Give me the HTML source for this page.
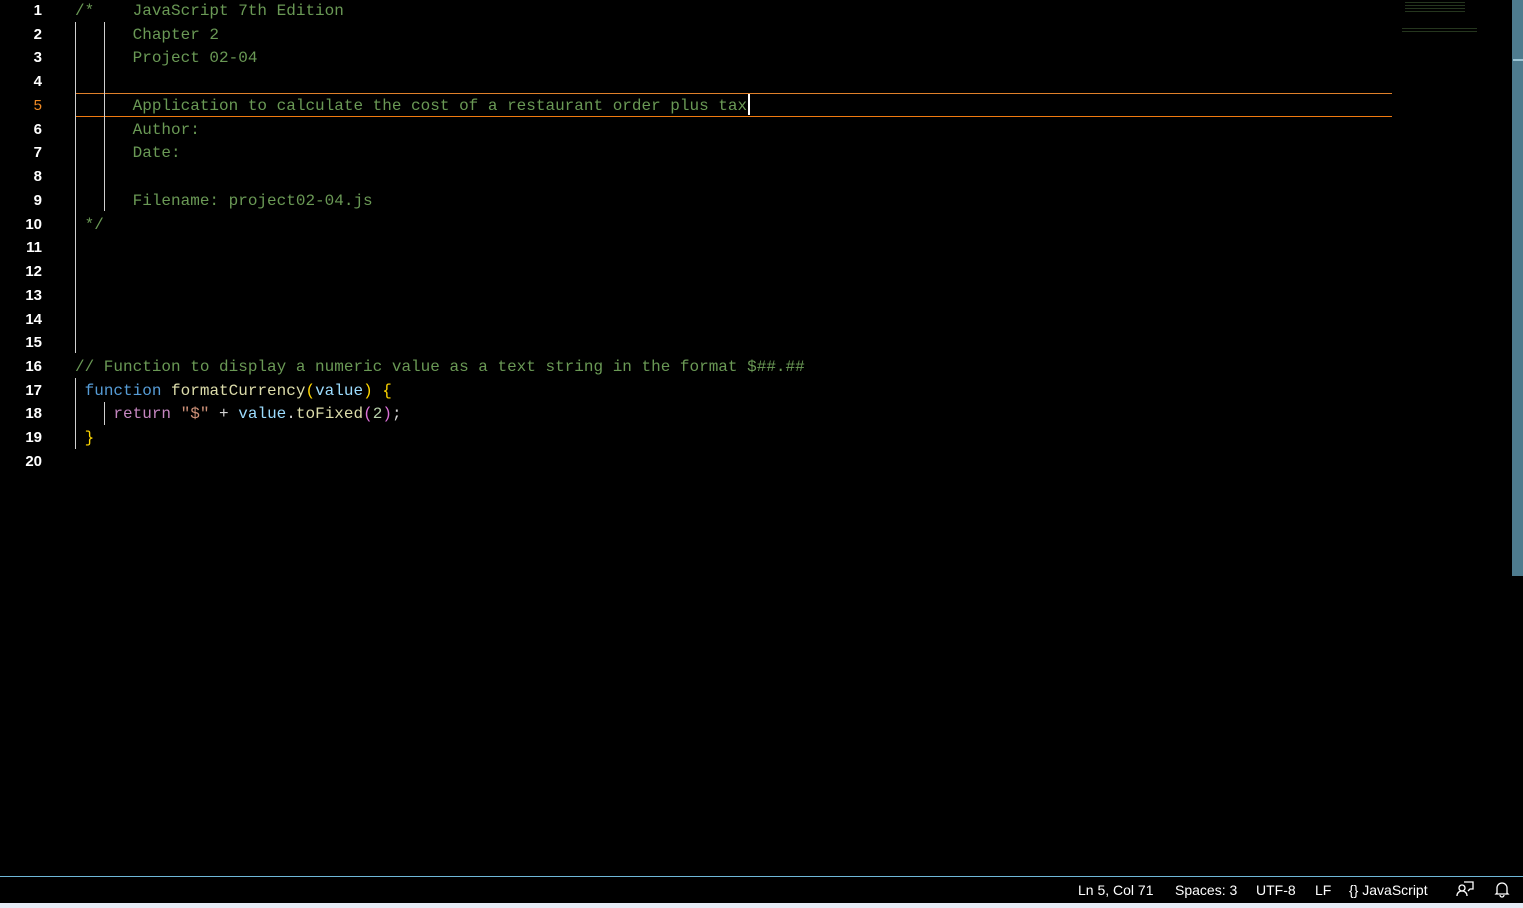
<!DOCTYPE html>
<html><head><style>
body{margin:0;width:1523px;height:908px;background:#000;overflow:hidden;position:relative;font-family:"Liberation Mono",monospace;}
.ln{position:absolute;left:0;width:42px;text-align:right;color:#fff;font-size:15px;font-family:"Liberation Sans",sans-serif;font-weight:bold;line-height:23.74px}
.code{position:absolute;left:75px;white-space:pre;font-size:16px;line-height:23.74px;color:#6a9955}
.g{position:absolute;width:1px;background:#d0d0d0}
.c{color:#6a9955}.k{color:#569cd6}.f{color:#dcdcaa}.y{color:#ffd700}.r{color:#c586c0}.s{color:#ce9178}.v{color:#9cdcfe}.n{color:#b5cea8}.p{color:#da70d6}.w{color:#d4d4d4}
.sb{position:absolute;top:877px;height:26px;line-height:26px;color:#fff;font-family:"Liberation Sans",sans-serif;font-size:14px}
</style></head><body>
<div class="ln" style="top:-1px">1<br>2<br>3<br>4<br><span style="color:#f08a24;font-weight:normal">5</span><br>6<br>7<br>8<br>9<br>10<br>11<br>12<br>13<br>14<br>15<br>16<br>17<br>18<br>19<br>20</div>
<div style="position:absolute;left:75px;top:93px;width:1317px;height:1px;background:#e0802a"></div>
<div style="position:absolute;left:75px;top:116px;width:1317px;height:1px;background:#f07a10"></div>
<div class="g" style="left:75px;top:22px;height:331px"></div>
<div class="g" style="left:104px;top:22px;height:189px"></div>
<div class="g" style="left:75px;top:378px;height:71px"></div>
<div class="g" style="left:104px;top:402px;height:23px"></div>
<div class="code" style="top:0px"><span class="c">/*    JavaScript 7th Edition
      Chapter 2
      Project 02-04

      Application to calculate the cost of a restaurant order plus tax
      Author:
      Date:

      Filename: project02-04.js
 */





// Function to display a numeric value as a text string in the format $##.##</span>
 <span class="k">function</span> <span class="f">formatCurrency</span><span class="y">(</span><span class="v">value</span><span class="y">)</span> <span class="y">{</span>
    <span class="r">return</span> <span class="s">"$"</span> <span class="w">+</span> <span class="v">value</span><span class="w">.</span><span class="f">toFixed</span><span class="p">(</span><span class="n">2</span><span class="p">)</span><span class="w">;</span>
 <span class="y">}</span>
</div>
<div style="position:absolute;left:748px;top:94px;width:2px;height:21px;background:#fff"></div>
<div style="position:absolute;left:1512px;top:0;width:11px;height:576px;background:#4e7b8e"></div>
<div style="position:absolute;left:1513px;top:59px;width:10px;height:2px;background:#9cc4d4"></div>
<div style="position:absolute;left:1405px;top:2px;width:60px;height:12px;opacity:.35;background:repeating-linear-gradient(#6a9955 0 1px,transparent 1px 3px)"></div>
<div style="position:absolute;left:1402px;top:28px;width:75px;height:6px;opacity:.35;background:repeating-linear-gradient(#6a9955 0 1px,transparent 1px 3px)"></div>
<div style="position:absolute;left:0;top:876px;width:1523px;height:1px;background:#6fb8d8"></div>
<div style="position:absolute;left:0;top:903px;width:1523px;height:5px;background:#e6ecf6"></div>
<div class="sb" style="left:1078px">Ln 5, Col 71</div>
<div class="sb" style="left:1175px">Spaces: 3</div>
<div class="sb" style="left:1256px">UTF-8</div>
<div class="sb" style="left:1315px">LF</div>
<div class="sb" style="left:1349px">{} JavaScript</div>
<svg style="position:absolute;left:1456px;top:880px" width="18" height="18" viewBox="0 0 18 18" fill="none" stroke="#fff" stroke-width="1.3"><circle cx="6" cy="8" r="3"/><path d="M1 16c0-3 2-5 5-5s5 2 5 5M8 2h9v7h-3l-2 2"/></svg>
<svg style="position:absolute;left:1494px;top:880px" width="16" height="18" viewBox="0 0 16 18" fill="none" stroke="#fff" stroke-width="1.3"><path d="M3 13V8a5 5 0 0110 0v5l1 1H2zM6 15a2 2 0 004 0"/></svg>
</body></html>
